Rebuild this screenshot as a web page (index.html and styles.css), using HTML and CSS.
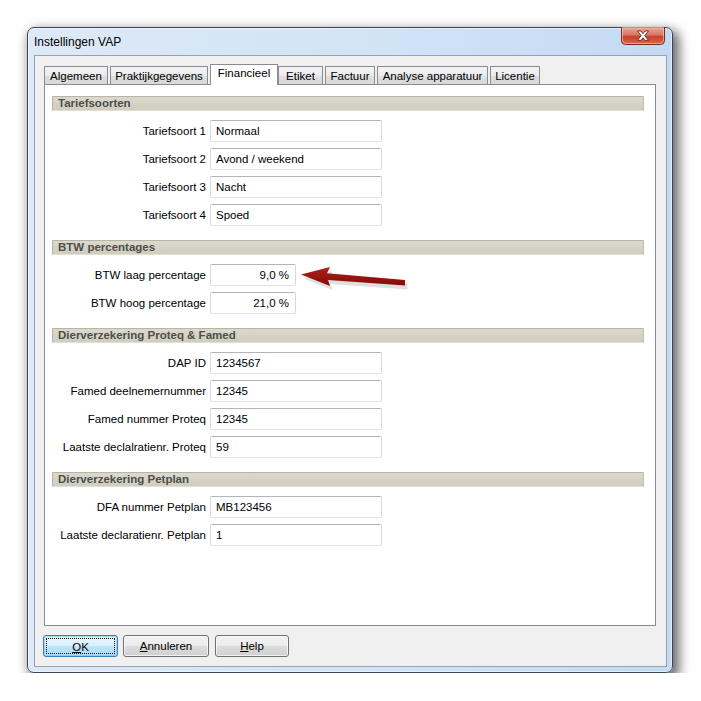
FILE: index.html
```html
<!DOCTYPE html>
<html>
<head>
<meta charset="utf-8">
<link rel="stylesheet" href="styles.css">
</head>
<body>
<div class="window">
  <div class="titlebar">
    <span class="title">Instellingen VAP</span>
    <div class="close">
      <svg width="44" height="18" viewBox="0 0 44 18">
        <defs>
          <linearGradient id="cg" x1="0" y1="0" x2="0" y2="1">
            <stop offset="0" stop-color="#eba896"/>
            <stop offset="0.45" stop-color="#d87762"/>
            <stop offset="0.55" stop-color="#c7412b"/>
            <stop offset="1" stop-color="#d9684c"/>
          </linearGradient>
        </defs>
        <path d="M0.5 0 H43.5 V13.5 Q43.5 17.5 39.5 17.5 H4.5 Q0.5 17.5 0.5 13.5 Z" fill="url(#cg)" stroke="#7a2a22" stroke-width="1"/>
        <path d="M1.5 1 H42.5 V13 Q42.5 16.5 39 16.5 H5 Q1.5 16.5 1.5 13 Z" fill="none" stroke="rgba(255,220,210,0.55)" stroke-width="1"/>
        <path d="M16.5 4 L20 4 L22 6.6 L24 4 L27.5 4 L23.8 8.7 L27.5 13.4 L24 13.4 L22 10.8 L20 13.4 L16.5 13.4 L20.2 8.7 Z" fill="#ffffff" stroke="#5b2a26" stroke-width="0.9" stroke-linejoin="round"/>
      </svg>
    </div>
  </div>
  <div class="client">
    <div class="tabs">
      <div class="tab t-alg">Algemeen</div>
      <div class="tab t-prak">Praktijkgegevens</div>
      <div class="tab active t-fin">Financieel</div>
      <div class="tab t-eti">Etiket</div>
      <div class="tab t-fac">Factuur</div>
      <div class="tab t-ana">Analyse apparatuur</div>
      <div class="tab t-lic">Licentie</div>
    </div>
    <div class="panel">
      <div class="section">
        <div class="section-head">Tariefsoorten</div>
        <div class="rows">
          <div class="row"><span class="label">Tariefsoort 1</span><span class="field">Normaal</span></div>
          <div class="row"><span class="label">Tariefsoort 2</span><span class="field">Avond / weekend</span></div>
          <div class="row"><span class="label">Tariefsoort 3</span><span class="field">Nacht</span></div>
          <div class="row"><span class="label">Tariefsoort 4</span><span class="field">Spoed</span></div>
        </div>
      </div>
      <div class="section">
        <div class="section-head">BTW percentages</div>
        <div class="rows">
          <div class="row"><span class="label">BTW laag percentage</span><span class="field num">9,0 %</span></div>
          <div class="row"><span class="label">BTW hoog percentage</span><span class="field num">21,0 %</span></div>
        </div>
      </div>
      <div class="section">
        <div class="section-head">Dierverzekering Proteq &amp; Famed</div>
        <div class="rows">
          <div class="row"><span class="label">DAP ID</span><span class="field">1234567</span></div>
          <div class="row"><span class="label">Famed deelnemernummer</span><span class="field">12345</span></div>
          <div class="row"><span class="label">Famed nummer Proteq</span><span class="field">12345</span></div>
          <div class="row"><span class="label">Laatste declalratienr. Proteq</span><span class="field">59</span></div>
        </div>
      </div>
      <div class="section">
        <div class="section-head">Dierverzekering Petplan</div>
        <div class="rows">
          <div class="row"><span class="label">DFA nummer Petplan</span><span class="field">MB123456</span></div>
          <div class="row"><span class="label">Laatste declaratienr. Petplan</span><span class="field">1</span></div>
        </div>
      </div>
      <svg class="arrow" width="112" height="28" viewBox="0 0 112 28">
        <defs>
          <linearGradient id="ag" x1="0" y1="0" x2="0" y2="1">
            <stop offset="0" stop-color="#b0201a"/>
            <stop offset="1" stop-color="#850a08"/>
          </linearGradient>
        </defs>
        <polygon points="2,11.5 31,4.5 28,10.5 106,17 106,22.5 29,17 31,23" fill="rgba(0,0,0,0.12)" transform="translate(1.5,2)"/>
        <polygon points="1,9.5 30,2 27,8.3 105,15 105,20.5 28,15 30,21" fill="url(#ag)"/>
      </svg>
    </div>
    <div class="buttons">
      <div class="btn default"><span class="focus"><u>O</u>K</span></div>
      <div class="btn w-ann"><u>A</u>nnuleren</div>
      <div class="btn w-help"><u>H</u>elp</div>
    </div>
  </div>
</div>
</body>
</html>
```

FILE: styles.css
```css
* { box-sizing: border-box; }
html, body { margin: 0; padding: 0; background: #ffffff; }
body {
  font-family: "Liberation Sans", Arial, sans-serif;
  font-size: 11.5px;
  color: #000;
}
.window {
  margin: 27px 0 0 27px;
  width: 646px;
  height: 646px;
  border: 1px solid #3a4656;
  border-radius: 7px;
  padding: 0 5px 5px 6px;
  background: linear-gradient(to right, #dde9f6 0%, #d3e4f6 50%, #c3daf3 100%);
  box-shadow: inset 0 0 0 1px rgba(255,255,255,0.55), 4px 5px 12px 2px rgba(0,0,0,0.6);
  display: flex;
  flex-direction: column;
}
.titlebar {
  height: 27px;
  display: flex;
  align-items: flex-start;
  justify-content: space-between;
}
.title {
  font-size: 12px;
  padding-top: 7px;
  color: #000;
}
.close {
  width: 44px;
  height: 18px;
  margin-top: -1px;
  margin-right: 2px;
}
.close svg { display: block; }
.client {
  height: 612px;
  background: #f0f0f0;
  border: 1px solid #93a4b8;
  padding: 8px 0 0 8px;
  display: flex;
  flex-direction: column;
}
.tabs {
  display: flex;
  align-items: flex-end;
  height: 20px;
  margin-left: 1px;
}
.tab {
  height: 18px;
  border: 1px solid #898c95;
  border-bottom: none;
  background: linear-gradient(#f3f3f3 0%, #ebebeb 50%, #dfdfdf 51%, #d8d8d8 100%);
  text-align: center;
  line-height: 18px;
  margin-right: 2px;
  white-space: nowrap;
}
.tab.active {
  height: 21px;
  margin-bottom: -1px;
  background: #ffffff;
  position: relative;
  z-index: 1;
  line-height: 17px;
  margin-right: 0;
}
.t-alg { width: 64px; }
.t-prak { width: 98px; }
.t-fin { width: 68px; }
.t-eti { width: 45px; }
.t-fac { width: 50px; }
.t-ana { width: 111px; }
.t-lic { width: 50px; }
.panel {
  position: relative;
  margin-left: 1px;
  width: 612px;
  height: 542px;
  background: #ffffff;
  border: 1px solid #898c95;
  padding: 11px 11px 0 7px;
  display: flex;
  flex-direction: column;
  gap: 14px;
}
.section-head {
  height: 15px;
  background: linear-gradient(#dbd9cc, #cfcdbd);
  border-top: 1px solid #b6b4a4;
  border-left: 1px solid #b6b4a4;
  border-right: 1px solid #c3c1b1;
  border-bottom: 1px solid #e2e0d5;
  color: #4d4d4d;
  font-weight: bold;
  line-height: 13px;
  padding-left: 5px;
}
.rows {
  margin-top: 9px;
  display: flex;
  flex-direction: column;
  gap: 6px;
}
.row {
  display: flex;
  align-items: center;
  height: 22px;
}
.label {
  width: 154px;
  text-align: right;
  margin-right: 4px;
  white-space: nowrap;
}
.field {
  width: 172px;
  height: 22px;
  border: 1px solid;
  border-color: #b2b5bc #d5d8de #e0e3e8 #d5d8de;
  border-radius: 2px;
  padding-left: 5px;
  line-height: 20px;
  white-space: nowrap;
}
.field.num {
  width: 86px;
  text-align: right;
  padding-left: 0;
  padding-right: 6px;
}
.arrow {
  position: absolute;
  left: 255px;
  top: 180px;
}
.buttons {
  display: flex;
  gap: 5px;
  margin-top: 9px;
}
.btn {
  width: 75px;
  height: 22px;
  border: 1px solid #707070;
  border-radius: 3px;
  background: linear-gradient(#f2f2f2 0%, #ebebeb 50%, #dddddd 51%, #cfcfcf 100%);
  box-shadow: inset 0 0 0 1px rgba(255,255,255,0.7);
  text-align: center;
  line-height: 20px;
}
.btn.w-ann { width: 86px; }
.btn.w-help { width: 74px; margin-left: 1px; }
.btn.default {
  border-color: #3c7fb1;
  background: linear-gradient(#eaf6fd 0%, #d9f0fc 50%, #bee6fd 51%, #a7d9f5 100%);
  box-shadow: inset 0 0 0 1px rgba(120,200,240,0.6);
  padding: 2px;
}
.btn.default .focus {
  display: block;
  height: 16px;
  line-height: 16px;
  border: 1px dotted #000;
}
u { text-decoration: underline; }
```
